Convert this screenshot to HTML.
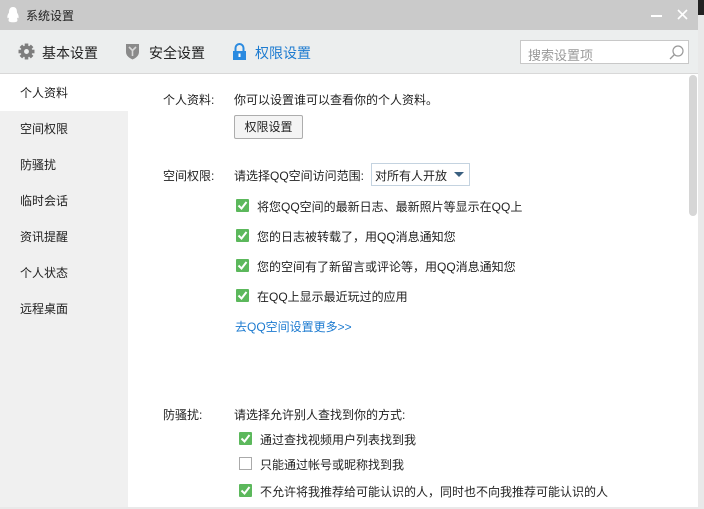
<!DOCTYPE html>
<html><head><meta charset="utf-8">
<style>
*{margin:0;padding:0;box-sizing:border-box}
body{width:704px;height:509px;overflow:hidden;background:#e9e9e9;font-family:"Liberation Sans","Noto Sans CJK SC",sans-serif;font-size:12px;color:#222;position:relative}
.win{position:absolute;left:0;top:0;width:698px;height:507px;background:#fff;overflow:hidden}
.title{position:absolute;left:0;top:0;width:698px;height:30px;background:#cacaca}
.title span{position:absolute;left:26px;top:7px;font-size:12px;color:#222}
.tool{position:absolute;left:0;top:30px;width:698px;height:44px;background:#eceeee;border-bottom:1px solid #d8d8d8}
.tab{position:absolute;top:13px;font-size:14px;color:#222}
.side{position:absolute;left:0;top:75px;width:128px;height:440px;background:#f0f0f0}
.side div{height:36px;line-height:36px;padding-left:20px;font-size:12px}
.side .sel{background:#fff}
.t{position:absolute;font-size:12px;white-space:nowrap}
.cb{position:absolute;width:13px;height:13px;background:#5cb85c;border-radius:1px}
.cb svg{position:absolute;left:1px;top:1px}
.cbe{position:absolute;width:13px;height:13px;border:1px solid #aaa;background:#fff}
</style></head><body>
<div style="position:absolute;left:698px;top:0;width:6px;height:15px;background:#222"></div>
<div class="win">
<div class="title">
<svg style="position:absolute;left:6px;top:6px" width="14" height="17" viewBox="0 0 14 17"><path d="M7 1C3.5 1 3 4 3 6.5C2 8 1 10 1.5 12C2 12.5 2.5 12 3 11.5C3 13 2 14 3 15.5C5 16.5 9 16.5 11 15.5C12 14 11 13 11 11.5C11.5 12 12 12.5 12.5 12C13 10 12 8 11 6.5C11 4 10.5 1 7 1Z" fill="#fff"/></svg>
<span>系统设置</span>
<div style="position:absolute;left:651px;top:15px;width:11px;height:1.5px;background:#fff"></div>
<svg style="position:absolute;left:677px;top:9px" width="11" height="11"><path d="M1 1L10 10M10 1L1 10" stroke="#fff" stroke-width="1.6"/></svg>
</div>
<div class="tool">
<svg style="position:absolute;left:18px;top:13px" width="17" height="17" viewBox="0 0 16 16"><g fill="#7d7d7d"><circle cx="8" cy="8" r="5.5"/><rect x="6.3" y="0.5" width="3.4" height="15"/><rect x="0.5" y="6.3" width="15" height="3.4"/><rect x="6.3" y="0.5" width="3.4" height="15" transform="rotate(45 8 8)"/><rect x="6.3" y="0.5" width="3.4" height="15" transform="rotate(-45 8 8)"/></g><circle cx="8" cy="8" r="2.3" fill="#eceeee"/></svg>
<div class="tab" style="left:42px">基本设置</div>
<svg style="position:absolute;left:125px;top:13px" width="15" height="17" viewBox="0 0 15 17"><path d="M1 1H14V9C14 13 10 15.5 7.5 16.5C5 15.5 1 13 1 9Z" fill="#8a8a8a"/><path d="M4 4L7.5 7.5L11 4M7.5 7.5V13" stroke="#d8d8d8" stroke-width="1.6" fill="none"/></svg>
<div class="tab" style="left:149px">安全设置</div>
<svg style="position:absolute;left:232px;top:13px" width="15" height="17" viewBox="0 0 15 17"><path d="M3.5 8V5A4 4 0 0 1 11.5 5V8" stroke="#2a8ae0" stroke-width="2" fill="none"/><rect x="1" y="8" width="13" height="9" fill="#2a8ae0"/><rect x="6.5" y="10.5" width="2" height="3.5" fill="#fff"/></svg>
<div class="tab" style="left:255px;color:#1d7bd0">权限设置</div>
<div style="position:absolute;left:520px;top:10px;width:169px;height:24px;background:#fff;border:1px solid #c8c8c8">
<span style="position:absolute;left:7px;top:4px;color:#999;font-size:13px">搜索设置项</span>
<svg style="position:absolute;left:148px;top:4px" width="15" height="15"><circle cx="9" cy="6" r="5" stroke="#999" fill="none" stroke-width="1.2"/><path d="M5.5 9.5L1 14" stroke="#999" stroke-width="1.3"/></svg>
</div>
</div>
<div class="side">
<div class="sel">个人资料</div><div>空间权限</div><div>防骚扰</div><div>临时会话</div><div>资讯提醒</div><div>个人状态</div><div>远程桌面</div>
</div>
<div style="position:absolute;left:689px;top:75px;width:8px;height:141px;background:#d6d6d6;border-radius:4px"></div>
<div class="t" style="left:163px;top:91px">个人资料:</div>
<div class="t" style="left:234px;top:91px">你可以设置谁可以查看你的个人资料。</div>
<div style="position:absolute;left:234px;top:115px;width:69px;height:24px;border:1px solid #adadad;background:#f4f4f4;border-radius:2px;text-align:center;line-height:22px;font-size:12px">权限设置</div>
<div class="t" style="left:163px;top:167px">空间权限:</div>
<div class="t" style="left:234px;top:167px">请选择QQ空间访问范围:</div>
<div style="position:absolute;left:371px;top:163px;width:99px;height:23px;border:1px solid #c4d3e0;background:#fff">
<span style="position:absolute;left:3px;top:3px">对所有人开放</span>
<svg style="position:absolute;left:82px;top:8px" width="10" height="6"><path d="M0 0H10L5 5Z" fill="#3a6080"/></svg>
</div>
<div class="cb" style="left:236px;top:199px"><svg width="11" height="11"><path d="M1.5 5.5L4.5 8.5L9.5 2" stroke="#fff" stroke-width="2" fill="none"/></svg></div>
<div class="t" style="left:257px;top:198px">将您QQ空间的最新日志、最新照片等显示在QQ上</div>
<div class="cb" style="left:236px;top:229px"><svg width="11" height="11"><path d="M1.5 5.5L4.5 8.5L9.5 2" stroke="#fff" stroke-width="2" fill="none"/></svg></div>
<div class="t" style="left:257px;top:228px">您的日志被转载了，用QQ消息通知您</div>
<div class="cb" style="left:236px;top:259px"><svg width="11" height="11"><path d="M1.5 5.5L4.5 8.5L9.5 2" stroke="#fff" stroke-width="2" fill="none"/></svg></div>
<div class="t" style="left:257px;top:258px">您的空间有了新留言或评论等，用QQ消息通知您</div>
<div class="cb" style="left:236px;top:289px"><svg width="11" height="11"><path d="M1.5 5.5L4.5 8.5L9.5 2" stroke="#fff" stroke-width="2" fill="none"/></svg></div>
<div class="t" style="left:257px;top:288px">在QQ上显示最近玩过的应用</div>
<div class="t" style="left:235px;top:318px;color:#1d7bd0">去QQ空间设置更多&gt;&gt;</div>
<div class="t" style="left:163px;top:406px">防骚扰:</div>
<div class="t" style="left:234px;top:406px">请选择允许别人查找到你的方式:</div>
<div class="cb" style="left:239px;top:432px"><svg width="11" height="11"><path d="M1.5 5.5L4.5 8.5L9.5 2" stroke="#fff" stroke-width="2" fill="none"/></svg></div>
<div class="t" style="left:260px;top:431px">通过查找视频用户列表找到我</div>
<div class="cbe" style="left:239px;top:457px"></div>
<div class="t" style="left:260px;top:456px">只能通过帐号或昵称找到我</div>
<div class="cb" style="left:239px;top:484px"><svg width="11" height="11"><path d="M1.5 5.5L4.5 8.5L9.5 2" stroke="#fff" stroke-width="2" fill="none"/></svg></div>
<div class="t" style="left:260px;top:483px">不允许将我推荐给可能认识的人，同时也不向我推荐可能认识的人</div>
</div>
</body></html>
